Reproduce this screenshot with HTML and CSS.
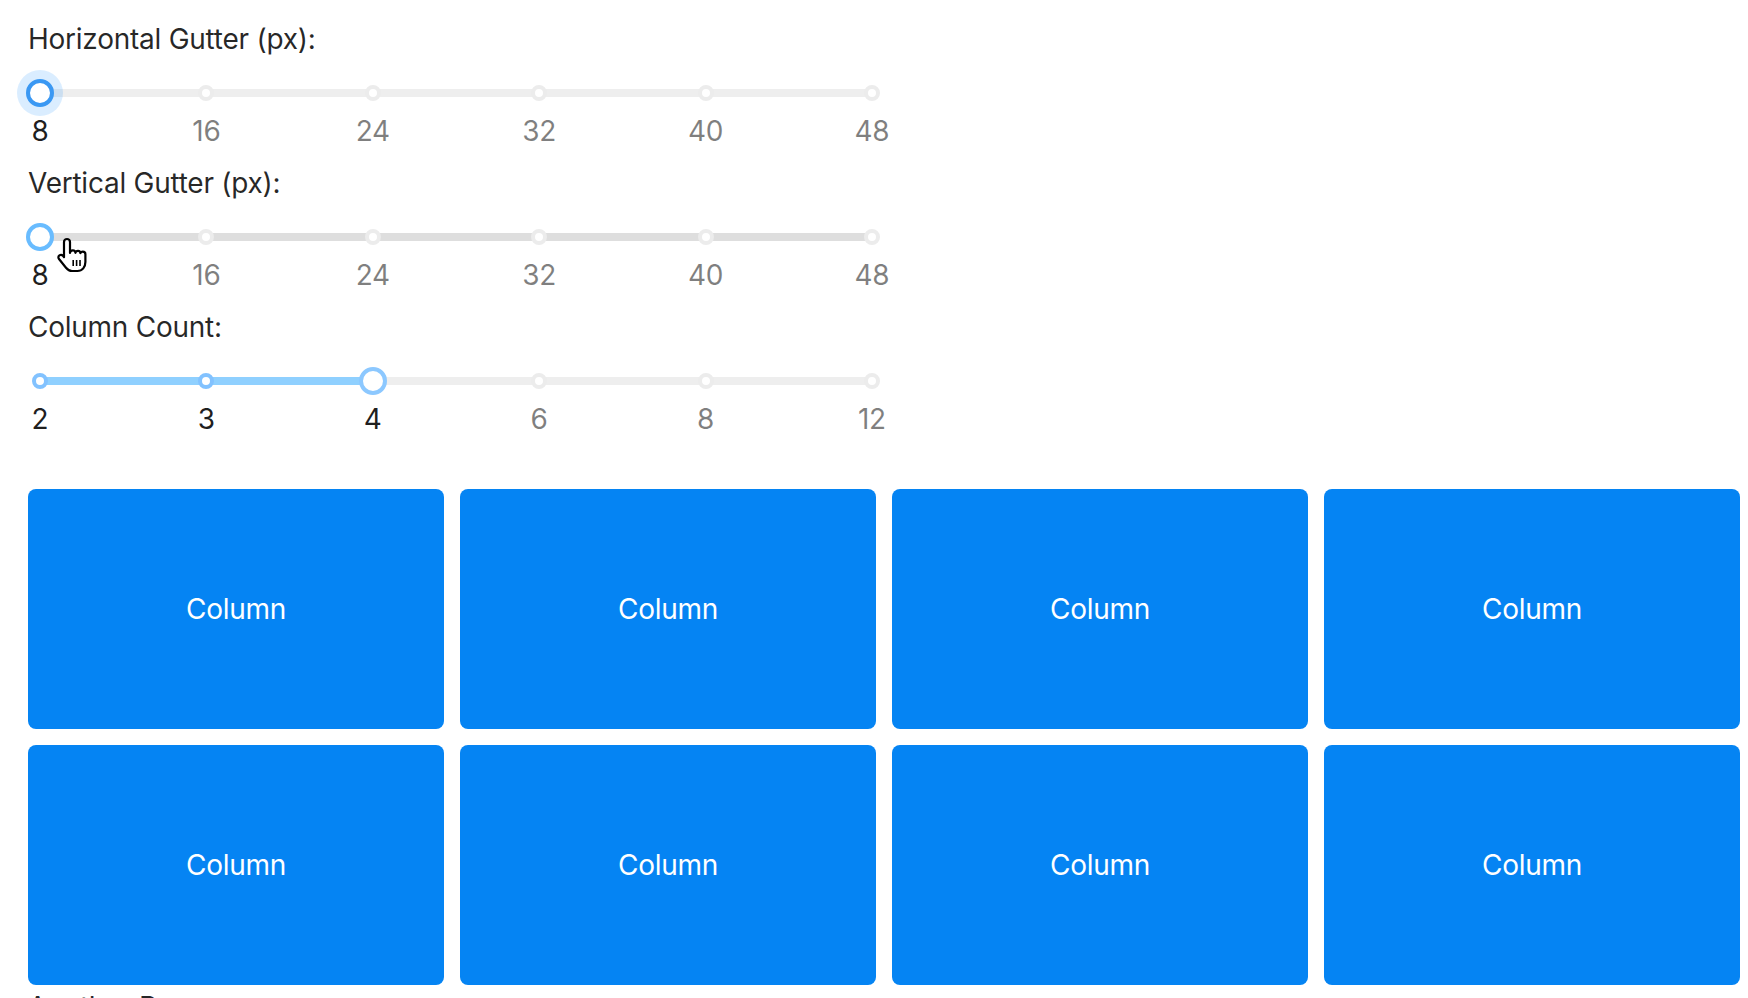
FILE: index.html
```html
<!DOCTYPE html>
<html lang="en">
<head>
<meta charset="utf-8">
<title>Grid Playground</title>
<link rel="stylesheet" href="styles.css">
</head>
<body>
<main class="page">
  <div class="label">Horizontal Gutter (px):</div>
  <div class="slider-wrap">
    <div class="slider is-focused">
      <div class="rail"></div>
      <div class="dots">
        <span class="dot"></span><span class="dot"></span><span class="dot"></span><span class="dot"></span><span class="dot"></span><span class="dot"></span>
      </div>
      <div class="handle" style="left:0%"></div>
      <div class="marks">
        <span class="mark is-active">8</span><span class="mark">16</span><span class="mark">24</span><span class="mark">32</span><span class="mark">40</span><span class="mark">48</span>
      </div>
    </div>
  </div>

  <div class="label">Vertical Gutter (px):</div>
  <div class="slider-wrap">
    <div class="slider is-hover">
      <div class="rail"></div>
      <div class="dots">
        <span class="dot"></span><span class="dot"></span><span class="dot"></span><span class="dot"></span><span class="dot"></span><span class="dot"></span>
      </div>
      <div class="handle" style="left:0%"></div>
      <div class="marks">
        <span class="mark is-active">8</span><span class="mark">16</span><span class="mark">24</span><span class="mark">32</span><span class="mark">40</span><span class="mark">48</span>
      </div>
    </div>
  </div>

  <div class="label">Column Count:</div>
  <div class="slider-wrap slider-wrap--last">
    <div class="slider">
      <div class="rail"></div>
      <div class="track" style="width:40%"></div>
      <div class="dots">
        <span class="dot is-active"></span><span class="dot is-active"></span><span class="dot is-active"></span><span class="dot"></span><span class="dot"></span><span class="dot"></span>
      </div>
      <div class="handle" style="left:40%"></div>
      <div class="marks">
        <span class="mark is-active">2</span><span class="mark is-active">3</span><span class="mark is-active">4</span><span class="mark">6</span><span class="mark">8</span><span class="mark">12</span>
      </div>
    </div>
  </div>

  <div class="grid">
    <div class="cell">Column</div>
    <div class="cell">Column</div>
    <div class="cell">Column</div>
    <div class="cell">Column</div>
    <div class="cell">Column</div>
    <div class="cell">Column</div>
    <div class="cell">Column</div>
    <div class="cell">Column</div>
  </div>
  <div class="label">Another Row:</div>

  <svg class="cursor" width="36" height="40" viewBox="0 0 18 20" aria-hidden="true">
    <path d="M6.5 1.5c0.8 0 1.5 0.7 1.5 1.5V8.5c0-0.8 0.7-1.3 1.4-1.3c0.7 0 1.3 0.5 1.3 1.2c0.1-0.6 0.6-1 1.3-1c0.7 0 1.2 0.5 1.2 1.2c0.2-0.5 0.6-0.8 1.2-0.8c0.7 0 1.3 0.6 1.3 1.3V13c0 2.5-1.5 4.5-4 4.5H9c-1.3 0-2.2-0.6-3-1.6L2.5 11.5c-0.5-0.6-0.4-1.4 0.2-1.8c0.6-0.4 1.3-0.3 1.8 0.2L5 10.6V3c0-0.8 0.7-1.5 1.5-1.5z" fill="#fff" stroke="#000" stroke-width="1.1" stroke-linejoin="round"/>
    <path d="M9.6 12v3M11.3 12v3M13 12v3" stroke="#000" stroke-width="0.8"/>
  </svg>
</main>
</body>
</html>
```
FILE: styles.css
```css
* { box-sizing: border-box; }

html, body {
  margin: 0;
  padding: 0;
  background: #fff;
}

body {
  font-family: "Inter", "Liberation Sans", Arial, sans-serif;
  font-size: 28px;
  letter-spacing: -0.25px;
  color: rgba(0, 0, 0, 0.85);
}

.page {
  position: relative;
  padding: 17px 8px 0 28px;
}

.label {
  line-height: 44px;
  height: 44px;
}

.slider-wrap {
  width: 856px;
}

.slider {
  position: relative;
  margin: 20px 12px 56px;
  padding: 8px 0;
  height: 24px;
}

.slider-wrap--last .slider {
  margin-bottom: 96px;
}

.rail {
  height: 8px;
  background: #eeeeee;
  border-radius: 4px;
}

.slider.is-hover .rail {
  background: #dedede;
}

.track {
  position: absolute;
  top: 8px;
  left: 0;
  height: 8px;
  background: #8fd0ff;
  border-radius: 4px;
}

.dots {
  position: absolute;
  top: 4px;
  left: -8px;
  right: -8px;
  display: flex;
  justify-content: space-between;
}

.dot {
  width: 16px;
  height: 16px;
  border: 4px solid #ececec;
  border-radius: 50%;
  background: #fff;
}

.dot.is-active {
  border-color: #82c2ff;
}

.handle {
  position: absolute;
  top: -2px;
  width: 28px;
  height: 28px;
  margin-left: -14px;
  border: 4px solid #8cc8ff;
  border-radius: 50%;
  background: #fff;
}

.slider.is-focused .handle {
  border-color: #3a98f3;
  box-shadow: 0 0 0 9px rgba(24, 144, 255, 0.16);
}

.slider.is-hover .handle {
  border-color: #69bcff;
}

.marks {
  position: absolute;
  top: 28px;
  left: -40px;
  right: -40px;
  display: flex;
  justify-content: space-between;
}

.mark {
  width: 80px;
  text-align: center;
  line-height: 44px;
  color: rgba(0, 0, 0, 0.5);
}

.mark.is-active {
  color: rgba(0, 0, 0, 0.88);
}

.grid {
  display: grid;
  grid-template-columns: repeat(4, 1fr);
  gap: 16px;
  width: 1712px;
}

.cell {
  height: 240px;
  line-height: 240px;
  text-align: center;
  color: #fff;
  background: #0584f3;
  border-radius: 8px;
}

.cursor {
  position: absolute;
  left: 54px;
  top: 236px;
}
```
